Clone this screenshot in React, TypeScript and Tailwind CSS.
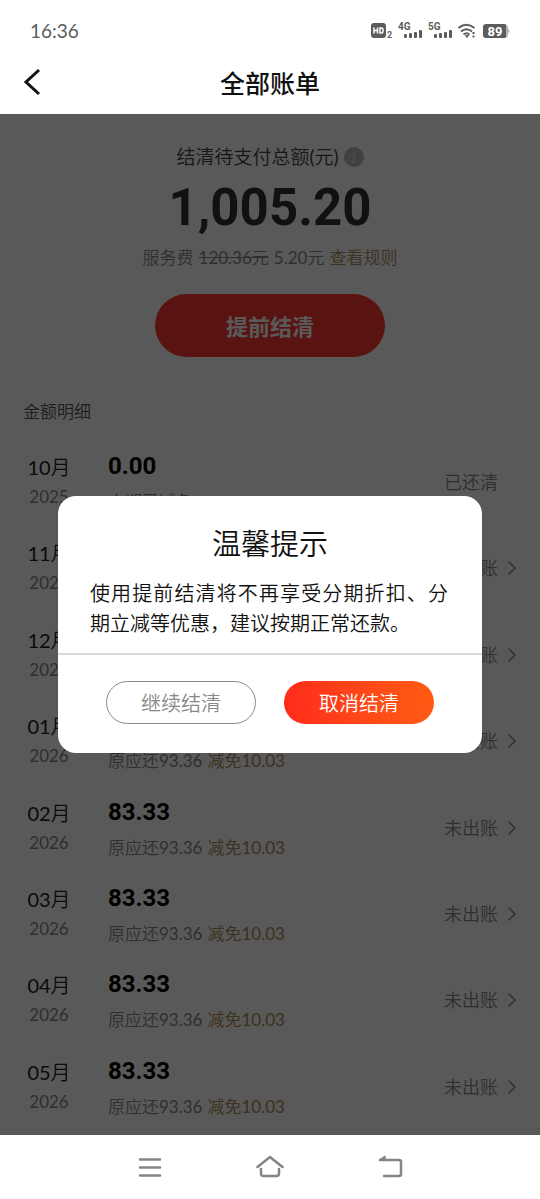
import { ChevronRight } from 'lucide-react';

interface Bill {
  month: string;
  year: string;
  amount: string;
  detail: string;
  discount?: string;
  status: string;
  settled?: boolean;
}

const DUE = { amount: '83.33', detail: '原应还93.36', discount: '减免10.03', status: '未出账' };

const BILLS: Bill[] = [
  { month: '10月', year: '2025', amount: '0.00', detail: '本期已减免', status: '已还清', settled: true },
  { month: '11月', year: '2025', ...DUE },
  { month: '12月', year: '2025', ...DUE },
  { month: '01月', year: '2026', ...DUE },
  { month: '02月', year: '2026', ...DUE },
  { month: '03月', year: '2026', ...DUE },
  { month: '04月', year: '2026', ...DUE },
  { month: '05月', year: '2026', ...DUE },
];

function Signal({ label }: { label: string }) {
  return (
    <svg width="26" height="18" viewBox="0 0 26 18" fill="#5c5c5c">
      <text x="0" y="8" fontSize="10" fontWeight="700" fontFamily="Roboto, sans-serif">
        {label}
      </text>
      <rect x="6" y="12" width="3" height="4" rx="1" />
      <rect x="11" y="11" width="3" height="5" rx="1" />
      <rect x="16" y="10" width="3" height="6" rx="1" />
      <rect x="21" y="8" width="3" height="8" rx="1" />
    </svg>
  );
}

function StatusBar() {
  return (
    <div className="flex h-[62px] items-center justify-between px-[30px] text-[#5c5c5c]">
      <span className="text-[19px] leading-6">16:36</span>
      <div className="flex items-center gap-1">
        <svg width="23" height="18" viewBox="0 0 23 18" fill="#5c5c5c">
          <rect x="0" y="1" width="15" height="15" rx="3" />
          <path d="M3 5.5v6M6.5 5.5v6M3 8.5h3.500M9 6v5h1.500q1.500 0 1.500-1.500v-2q0-1.500-1.500-1.500z" fill="none" stroke="#fff" strokeWidth="1.500" />
          <text x="16" y="16" fontSize="9" fontWeight="700" fontFamily="Roboto, sans-serif">
            2
          </text>
        </svg>
        <Signal label="4G" />
        <Signal label="5G" />
        <svg width="20" height="18" viewBox="0 0 20 18" fill="none" stroke="#5c5c5c" strokeWidth="2">
          <path d="M.5 6q8-6.500 16 0M3 9.500q5.500-4.500 11 0M5.500 12.500q3-2.500 6 0" />
          <path d="M7.500 13.500h3l-1.500 2z" fill="#5c5c5c" strokeWidth="1" />
          <path d="M15.500 10v2M15.500 13.500v2" />
        </svg>
        <svg width="28" height="18" viewBox="0 0 28 18">
          <rect x="1" y="2" width="24" height="14" rx="3" fill="#5c5c5c" />
          <path d="M24 2.500q2 .5 2 3v1q1.500 1 1.500 2.500t-1.500 2.500v1q0 2.500-2 3z" fill="#b5b5b5" />
          <text x="13" y="14" fontSize="13" fontWeight="700" fill="#fff" textAnchor="middle" fontFamily="Roboto, sans-serif">
            89
          </text>
        </svg>
      </div>
    </div>
  );
}

function BillRow({ bill }: { bill: Bill }) {
  return (
    <li className="flex items-start">
      <div className="w-[50px] text-center">
        <p className="mt-2 text-[20px] leading-[30px] text-[#222]">{bill.month}</p>
        <p className="text-[17px] leading-[30px] text-[#888]">{bill.year}</p>
      </div>
      <div className="ml-[34px] flex-1">
        <p className="mt-1 font-[Roboto,sans-serif] text-[24px] font-bold leading-9 text-black">{bill.amount}</p>
        <p className="mt-1 text-[17px] leading-7 text-[#888]">
          {bill.detail}
          {bill.discount && <span className="ml-[5px] text-[#b08a58]">{bill.discount}</span>}
        </p>
      </div>
      <button
        type="button"
        className="mt-6 flex w-[76px] items-center whitespace-nowrap text-[18px] leading-7 text-[#888]"
      >
        {bill.status}
        {!bill.settled && <ChevronRight className="ml-0.5 size-6 shrink-0" strokeWidth={1.5} />}
      </button>
    </li>
  );
}

function NoticeDialog() {
  return (
    <div
      role="dialog"
      aria-modal="true"
      aria-labelledby="notice-title"
      className="mx-[58px] w-full overflow-hidden rounded-[18px] bg-white"
    >
      <h2 id="notice-title" className="mt-7 text-center text-[29px] leading-10 text-[#111]">
        温馨提示
      </h2>
      <p className="mx-8 mt-[14px] pr-[2px] text-justify text-[20px] leading-[30px] text-[#111]">
        使用提前结清将不再享受分期折扣、分期立减等优惠，建议按期正常还款。
      </p>
      <div className="mt-[15px] border-t-2 border-[#d9d9d9]" />
      <div className="mb-[29px] mt-[26px] flex justify-center gap-7">
        <button
          type="button"
          className="h-[43px] w-[150px] rounded-full border border-[#888] text-[20px] text-[#888]"
        >
          继续结清
        </button>
        <button
          type="button"
          className="h-[43px] w-[150px] rounded-full bg-linear-to-r from-[#ff2a1a] to-[#ff5a14] text-[20px] text-white"
        >
          取消结清
        </button>
      </div>
    </div>
  );
}

export default function App() {
  return (
    <div
      lang="zh-CN"
      className="flex min-h-screen flex-col bg-white font-[Lato,'Noto_Sans_CJK_SC_DemiLight','Noto_Sans_CJK_SC',sans-serif]"
    >
      <StatusBar />
      <header className="grid h-[52px] grid-cols-[1fr_auto_1fr] items-center pb-[13px]">
        <button type="button" aria-label="返回" className="ml-[22px] w-5">
          <svg width="20" height="28" viewBox="0 0 20 28" fill="none" stroke="#111" strokeWidth="3">
            <path d="M17 2 4 14l13 12" />
          </svg>
        </button>
        <h1 className="font-['Noto_Sans_CJK_SC',sans-serif] text-[25px] font-medium leading-9 text-[#111]">全部账单</h1>
      </header>

      <main className="relative flex flex-1 flex-col">
        <section className="flex flex-col items-center pt-7">
          <div className="flex items-center gap-[5px] text-[19px] leading-[30px] text-[#444]">
            结清待支付总额(元)
            <svg width="20" height="20" viewBox="0 0 20 20">
              <circle cx="10" cy="10" r="10" fill="#bbb" />
              <path d="M11 4.500v2.500M10.500 8.500l-1 6.500M8 9h2.500M8 15h3" stroke="#ddd" strokeWidth="1.500" fill="none" />
            </svg>
          </div>
          <p className="mt-[7px] font-[Roboto,sans-serif] text-[51px] font-bold leading-[58px] text-[#333]">
            1,005.20
          </p>
          <p className="mt-[7px] flex gap-[5px] text-[17px] leading-7 text-[#888]">
            服务费 <s>120.36元</s>
            <span>5.20元</span>
            <a href="#rules" className="text-[#b08a58]">
              查看规则
            </a>
          </p>
          <button
            type="button"
            className="mt-[22px] h-[63px] w-[230px] rounded-full bg-[#ff3830] font-['Noto_Sans_CJK_SC',sans-serif] text-[22px] font-bold text-white"
          >
            提前结清
          </button>
        </section>

        <h2 className="mt-10 px-[23px] text-[17px] leading-[30px] text-[#555]">金额明细</h2>
        <ul className="mt-[17px] grid flex-1 auto-rows-fr pl-6 pr-5">
          {BILLS.map(bill => (
            <BillRow key={`${bill.year}-${bill.month}`} bill={bill} />
          ))}
        </ul>

        {/* Backdrop */}
        <div className="absolute inset-0 flex items-center justify-center bg-black/65">
          <NoticeDialog />
        </div>
      </main>

      <nav className="flex h-16 items-center justify-center gap-[92px]">
        <button type="button" aria-label="最近任务">
          <svg width="28" height="28" viewBox="0 0 28 28" fill="none" stroke="#858585" strokeWidth="2.500" strokeLinecap="round">
            <path d="M4 6.500h20M4 14.500h20M4 22.500h20" />
          </svg>
        </button>
        <button type="button" aria-label="主屏幕">
          <svg width="28" height="28" viewBox="0 0 28 28" fill="none" stroke="#858585" strokeWidth="2.500" strokeLinecap="round" strokeLinejoin="round">
            <path d="M1.500 14 14 4l12.500 10M5 16v4.500q0 2.500 2.500 2.500h13q2.500 0 2.500-2.500V16" />
          </svg>
        </button>
        <button type="button" aria-label="返回上一级">
          <svg width="28" height="28" viewBox="0 0 28 28" fill="none" stroke="#858585" strokeWidth="2.500" strokeLinecap="round" strokeLinejoin="round">
            <path d="M4 7h19q2 0 2 2v12q0 2-2 2H8" />
            <path d="M3.500 7 9 3.500V7z" fill="#858585" strokeWidth="1.500" />
          </svg>
        </button>
      </nav>
    </div>
  );
}
